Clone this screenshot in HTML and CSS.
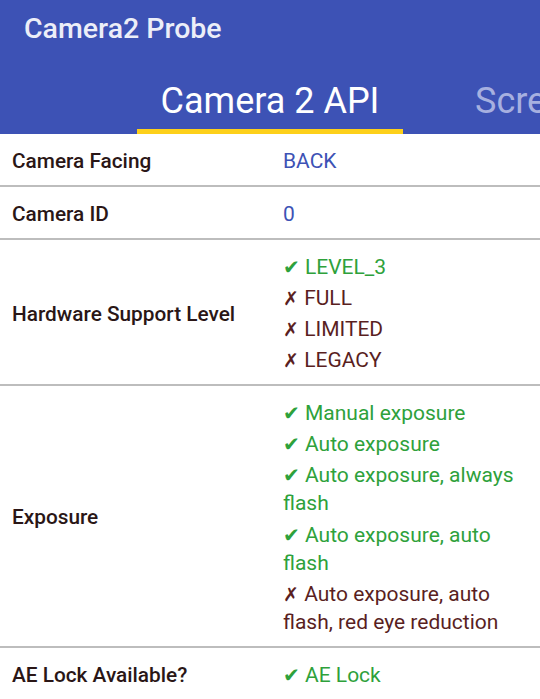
FILE: index.html
```html
<!DOCTYPE html>
<html lang="en">
<head>
  <meta charset="UTF-8" />
  <meta name="viewport" content="width=device-width, initial-scale=1.0" />
  <title>Camera2 Probe</title>
  <link rel="stylesheet" href="styles.css">
</head>
<body>

  <div class="appbar">
    <div class="title">Camera2 Probe</div>
    <div class="tabs">
      <div class="tab active">Camera 2 API</div>
      <div class="tab">Screen</div>
    </div>
  </div>

  <div class="table">
    <div class="row">
      <div class="label">Camera Facing</div>
      <div class="value plain">BACK</div>
    </div>
    <div class="row">
      <div class="label">Camera ID</div>
      <div class="value plain">0</div>
    </div>
    <div class="row">
      <div class="label">Hardware Support Level</div>
      <div class="value">
        <div class="yes"><span class="mark">✔</span> LEVEL_3</div>
        <div class="no"><span class="mark">✗</span> FULL</div>
        <div class="no"><span class="mark">✗</span> LIMITED</div>
        <div class="no"><span class="mark">✗</span> LEGACY</div>
      </div>
    </div>
    <div class="row">
      <div class="label">Exposure</div>
      <div class="value">
        <div class="yes"><span class="mark">✔</span> Manual exposure</div>
        <div class="yes"><span class="mark">✔</span> Auto exposure</div>
        <div class="yes"><span class="mark">✔</span> Auto exposure, always flash</div>
        <div class="yes"><span class="mark">✔</span> Auto exposure, auto flash</div>
        <div class="no"><span class="mark">✗</span> Auto exposure, auto flash, red eye reduction</div>
      </div>
    </div>
    <div class="row">
      <div class="label">AE Lock Available?</div>
      <div class="value">
        <div class="yes"><span class="mark">✔</span> AE Lock</div>
      </div>
    </div>
  </div>

</body>
</html>
```

FILE: styles.css
```css
body {
  margin: 0;
  font-family: Roboto, 'Noto Sans', sans-serif;
  background: white;
  overflow: hidden;
}

.appbar {
  background-color: #3d52b5;
  height: 134px;
  display: flex;
  flex-direction: column;
}

.title {
  color: #eceef8;
  font-size: 28.5px;
  font-weight: 500;
  padding: 12px 24px 0;
  height: 48px;
}

.tabs {
  display: flex;
  margin-top: auto;
  padding-left: 137px;
  white-space: nowrap;
  overflow: hidden;
}

.tab {
  width: 266px;
  flex-shrink: 0;
  text-align: center;
  font-size: 36px;
  color: #a7b0e0;
  height: 74px;
  line-height: 82px;
  box-sizing: border-box;
}

.tab + .tab {
  text-align: left;
  padding-left: 72px;
}

.tab.active {
  color: white;
  border-bottom: 5px solid #fdd01a;
}

.row {
  display: grid;
  grid-template-columns: 283px 1fr;
  align-items: center;
  border-bottom: 2px solid #bdbdbd;
  padding: 13px 0 10px;
}

.label {
  padding-left: 12px;
  font-size: 20.8px;
  font-weight: 500;
  color: #2a1616;
}

.value {
  padding-right: 16px;
  font-size: 21px;
  line-height: 28px;
  display: flex;
  flex-direction: column;
  gap: 3.1px;
}

.value.plain {
  color: #3d52b5;
}

.yes {
  color: #2ea13b;
}

.no {
  color: #5a1f1f;
}

.mark {
  display: inline-block;
  font-family: 'DejaVu Sans', sans-serif;
  font-size: 20px;
  line-height: 19px;
}

.no .mark {
  font-size: 19px;
  font-weight: bold;
}
```
